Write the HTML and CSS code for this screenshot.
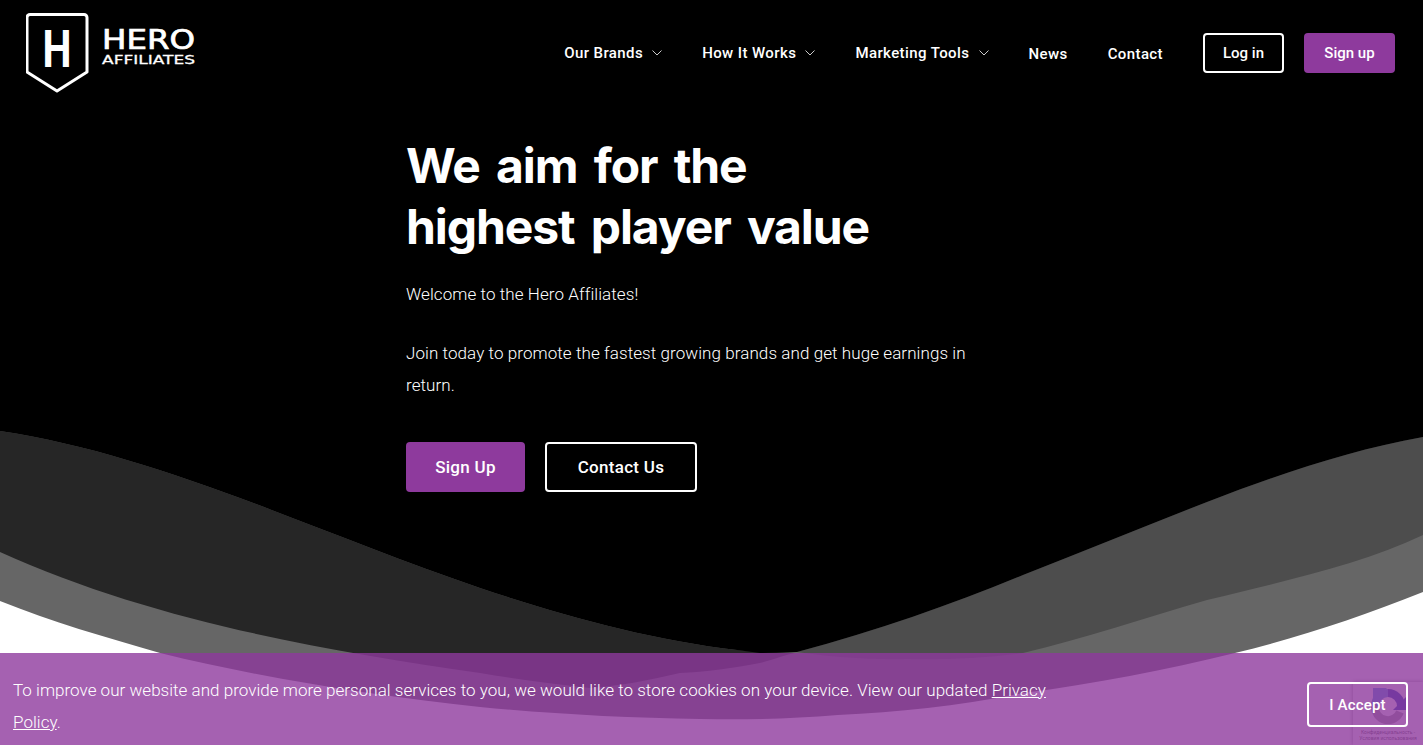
FILE: index.html
```html
<!DOCTYPE html>
<html lang="en">
<head>
    <meta charset="UTF-8">
    <meta name="viewport" content="width=device-width, initial-scale=1.0">
    <title>Hero Affiliates</title>
    <link rel="stylesheet" href="styles.css">
</head>
<body>
    <div class="page">
        <svg class="waves" viewBox="0 0 1423 745" width="1423" height="745">
            <path fill="#666666" d="M0 0H1423V592C1360 617 1298 638 1235 653C1165 670 1095 684 1023 693C960 706 900 712 838 715C790 719 745 720 700 719C625 718 550 714 480 707C370 695 262 678 160 653C105 637 52 622 0 601Z"/>
            <path fill="#262626" d="M0 431C160 455 310 530 480 588C560 615 650 640 737 650L795 653C785 655 772 660 760 663C735 668 705 672 680 673C650 680 620 686 590 688C555 684 515 679 480 673C320 650 150 620 0 552Z"/>
            <path fill="#4d4d4d" d="M797 652C880 630 955 603 1023 575C1085 551 1145 526 1207 502C1280 474 1350 450 1423 437V535C1360 565 1280 582 1207 600C1145 618 1085 638 1023 653C985 658 945 660 907 659C870 660 830 657 797 652Z"/>
            <path fill="#000000" d="M0 0H1423V437C1350 450 1280 474 1207 502C1145 526 1085 551 1023 575C955 603 880 630 797 652L760 653L737 650C650 640 560 615 480 588C310 530 160 455 0 431Z"/>
        </svg>

        <header class="topbar">
            <a class="logo" href="#">
                <svg viewBox="0 0 170 80" width="170" height="80">
                    <path fill="none" stroke="#fff" stroke-width="3" stroke-linejoin="round" d="M4 1.500H58A3 3 0 0 1 61 4.500V59L31 78L1 59V4.500A3 3 0 0 1 4 1.500Z"/>
                    <text class="logo-h" x="16.500" y="54" textLength="29" lengthAdjust="spacingAndGlyphs">H</text>
                    <text class="logo-hero" x="76" y="36" textLength="93" lengthAdjust="spacingAndGlyphs">HERO</text>
                    <text class="logo-sub" x="76" y="51" textLength="93" lengthAdjust="spacingAndGlyphs">AFFILIATES</text>
                </svg>
            </a>
            <nav class="nav">
                <a href="#" class="nav-link">Our Brands <svg class="chev" viewBox="0 0 10 6" width="10" height="6"><path d="M.5.5 5 5 9.500.5"/></svg></a>
                <a href="#" class="nav-link">How It Works <svg class="chev" viewBox="0 0 10 6" width="10" height="6"><path d="M.5.5 5 5 9.500.5"/></svg></a>
                <a href="#" class="nav-link">Marketing Tools <svg class="chev" viewBox="0 0 10 6" width="10" height="6"><path d="M.5.5 5 5 9.500.5"/></svg></a>
                <a href="#" class="nav-link plain">News</a>
                <a href="#" class="nav-link plain">Contact</a>
            </nav>
            <div class="auth">
                <a href="#" class="btn btn-line small login">Log in</a>
                <a href="#" class="btn btn-fill small signup">Sign up</a>
            </div>
        </header>

        <main class="hero">
            <h1>We aim for the<br>highest player value</h1>
            <p class="welcome">Welcome to the Hero Affiliates!</p>
            <p class="join">Join today to promote the fastest growing brands and get huge earnings in return.</p>
            <div class="actions">
                <a href="#" class="btn btn-fill big signup-big">Sign Up</a>
                <a href="#" class="btn btn-line big contact-big">Contact Us</a>
            </div>
        </main>

        <div class="recaptcha">
            <svg viewBox="0 0 36 36" width="36" height="36">
                <path fill="none" stroke="#9a9a9a" stroke-width="8" d="M5 18a13 13 0 0 0 25 6"/>
                <path fill="none" stroke="#1c3aa9" stroke-width="8" d="M18 5a13 13 0 0 1 13 13"/>
                <path fill="#1c3aa9" d="M36 9v13H23z"/>
                <path fill="none" stroke="#4a90e2" stroke-width="8" d="M5 18a13 13 0 0 1 13-13"/>
                <path fill="#4a90e2" d="M3 0h14L3 14z"/>
            </svg>
            <div class="recaptcha-links">Конфиденциальность - Условия использования</div>
        </div>

        <div class="cookie">
            <p>To improve our website and provide more personal services to you, we would like to store cookies on your device. View our updated <a href="#">Privacy Policy</a>.</p>
            <a href="#" class="btn btn-line accept">I Accept</a>
        </div>
    </div>
</body>
</html>
```

FILE: styles.css
```css
* {
    box-sizing: border-box;
}
body {
    margin: 0;
    padding: 0;
    background: #fff;
    color: #fff;
    font-family: Roboto, "Liberation Sans", sans-serif;
}
a {
    color: #fff;
    text-decoration: none;
}
.page {
    position: relative;
    height: 745px;
    overflow: hidden;
}
.waves {
    position: absolute;
    top: 0;
    left: 0;
}

/* header */
.topbar {
    position: relative;
    display: flex;
    align-items: center;
    height: 106px;
    padding: 0 28px 0 26px;
}
.logo {
    display: flex;
}
.logo-h {
    fill: #fff;
    font-size: 52px;
    font-weight: 700;
    font-family: Roboto, sans-serif;
}
.logo-hero {
    fill: #fff;
    stroke: #fff;
    stroke-width: .7;
    font-size: 26px;
    font-family: "DejaVu Sans", sans-serif;
}
.logo-sub {
    fill: #fff;
    stroke: #fff;
    stroke-width: .3;
    font-size: 13px;
    font-family: "DejaVu Sans", sans-serif;
}
.nav {
    display: flex;
    align-items: center;
    gap: 40px;
    margin-left: auto;
    margin-right: 40px;
}
.nav-link {
    font-size: 15px;
    font-weight: 500;
    letter-spacing: .4px;
}
.nav-link.plain {
    padding-top: 2px;
}
.chev {
    margin-left: 5px;
    vertical-align: 2px;
}
.chev path {
    fill: none;
    stroke: #ccc;
    stroke-width: 1;
}
.auth {
    display: flex;
    gap: 20px;
}

/* buttons */
.btn {
    display: flex;
    align-items: center;
    justify-content: center;
    border-radius: 4px;
    font-weight: 500;
}
.btn-line {
    border: 2px solid #fff;
}
.btn-fill {
    background: #8e3a9d;
}
.small {
    height: 40px;
    font-size: 15px;
}
.login {
    width: 81px;
}
.signup {
    width: 91px;
}
.big {
    height: 50px;
    font-size: 17px;
    letter-spacing: .3px;
}
.signup-big {
    width: 119px;
}
.contact-big {
    width: 152px;
}

/* hero */
.hero {
    position: relative;
    width: 611px;
    margin: 0 auto;
    padding-top: 29px;
}
.hero h1 {
    margin: 0;
    font-family: Inter, Roboto, sans-serif;
    font-size: 48px;
    line-height: 61px;
    font-weight: 700;
    letter-spacing: -1.1px;
    word-spacing: 6px;
}
.hero p {
    margin: 0;
    font-size: 17px;
    line-height: 32px;
    font-weight: 300;
    letter-spacing: .08px;
    max-width: 580px;
}
.hero .welcome {
    padding-top: 21px;
}
.hero .join {
    margin-top: 27px;
}
.actions {
    display: flex;
    gap: 20px;
    margin-top: 41px;
}

/* recaptcha badge sits under the cookie bar */
.recaptcha {
    position: absolute;
    top: 682px;
    left: 1353px;
    width: 70px;
    height: 63px;
    padding-top: 6px;
    background: #fff;
    box-shadow: 0 0 4px rgba(0, 0, 0, .5);
    text-align: center;
}
.recaptcha svg {
    display: block;
    margin: 0 auto;
}
.recaptcha-links {
    font-size: 5px;
    line-height: 6px;
    color: #555;
    margin-top: 5px;
}

/* cookie bar */
.cookie {
    position: absolute;
    left: 0;
    right: 0;
    bottom: 0;
    height: 92px;
    display: flex;
    padding: 21px 15px 0 13px;
    background: rgba(142, 58, 157, .8);
}
.cookie p {
    margin: 0;
    width: 1050px;
    font-size: 17px;
    line-height: 32px;
    font-weight: 300;
    letter-spacing: .03px;
}
.cookie p a {
    text-decoration: underline;
}
.accept {
    width: 101px;
    height: 45px;
    margin: 8px 0 0 auto;
    font-size: 15px;
    letter-spacing: .2px;
}
```
